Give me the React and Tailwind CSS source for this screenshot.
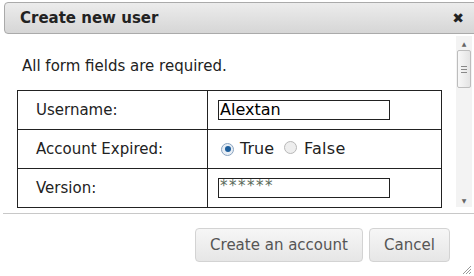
import React from 'react';

const font = { fontFamily: '"DejaVu Sans", Verdana, sans-serif' };

const Radio = ({ checked }) => (
  <span
    className={`inline-flex items-center justify-center w-[13px] h-[13px] rounded-full border ${
      checked ? 'border-[#8aa4c0] bg-[#e8eef5]' : 'border-[#b8b8b8] bg-[#eeeeee]'
    }`}
  >
    {checked && <span className="w-[6px] h-[6px] rounded-full bg-[#1d5e9c]" />}
  </span>
);

export default function App() {
  return (
    <div className="w-[474px] h-[276px] bg-white overflow-hidden text-[#222]" style={font}>
      {/* title bar */}
      <div className="pt-[2px] pl-[4px]">
        <div className="w-[480px] h-[32px] flex items-center justify-between border border-[#aaaaaa] rounded-[4px] bg-gradient-to-b from-[#ececec] to-[#d6d6d6]">
          <span className="pl-[15px] text-[15px] font-bold text-[#222]">Create new user</span>
          <span className="mr-[19px] text-[14px] font-bold leading-none text-[#222]">✖</span>
        </div>
      </div>

      {/* scrolling content */}
      <div className="flex h-[179px]">
        <div className="flex-1 pl-[17px] pt-[22px]">
          <p className="pl-[5px] text-[15px] leading-[20px]">All form fields are required.</p>
          <table className="mt-[14px] w-[425px] border-collapse text-[15px]">
            <tbody>
              <tr className="h-[39px]">
                <td className="w-[190px] border border-[#222] pl-[18px]">Username:</td>
                <td className="border border-[#222] pl-[10px]">
                  <div className="w-[172px] h-[20px] border border-[#222] px-[1px] text-[16px] leading-[18px] text-black">
                    Alextan
                  </div>
                </td>
              </tr>
              <tr className="h-[39px]">
                <td className="border border-[#222] pl-[18px]">Account Expired:</td>
                <td className="border border-[#222] pl-[13px]">
                  <div className="flex items-center text-[16px]">
                    <Radio checked />
                    <span className="ml-[6px]">True</span>
                    <span className="ml-[10px]">
                      <Radio />
                    </span>
                    <span className="ml-[7px] tracking-[0.3px]">False</span>
                  </div>
                </td>
              </tr>
              <tr className="h-[39px]">
                <td className="border border-[#222] pl-[18px]">Version:</td>
                <td className="border border-[#222] pl-[10px]">
                  <div className="w-[172px] h-[20px] border border-[#222] px-[1px] text-[15px] leading-[14px] text-[#5b6b5b] tracking-[1.5px]">
                    ******
                  </div>
                </td>
              </tr>
            </tbody>
          </table>
        </div>

        {/* scrollbar */}
        <div className="w-[16px] mr-[2px] mt-[2px] mb-[6px] flex flex-col items-center bg-[#f3f3f3]">
          <div className="h-[14px] flex items-center justify-center text-[6px] text-[#666]">▲</div>
          <div className="w-[14px] h-[38px] border border-[#bdbdbd] rounded-[2px] bg-gradient-to-r from-[#f8f8f8] to-[#e4e4e4] flex flex-col items-center justify-center gap-[2px]">
            <span className="w-[6px] h-[1px] bg-[#888]" />
            <span className="w-[6px] h-[1px] bg-[#888]" />
            <span className="w-[6px] h-[1px] bg-[#888]" />
          </div>
          <div className="flex-1" />
          <div className="h-[14px] flex items-center justify-center text-[6px] text-[#666]">▼</div>
        </div>
      </div>

      {/* button pane */}
      <div className="ml-[3px] border-t border-[#c8c8c8] h-[63px] flex justify-end items-start pt-[14px] pr-[24px] gap-[6px] relative">
        <button className="h-[34px] w-[168px] border border-[#d3d3d3] rounded-[4px] bg-gradient-to-b from-[#f6f6f6] to-[#e6e6e6] text-[15px] text-[#555]">
          Create an account
        </button>
        <button className="h-[34px] w-[81px] border border-[#d3d3d3] rounded-[4px] bg-gradient-to-b from-[#f6f6f6] to-[#e6e6e6] text-[15px] text-[#555]">
          Cancel
        </button>
        <svg className="absolute right-[2px] bottom-[1px]" width="10" height="10" viewBox="0 0 10 10">
          <path d="M9 1 L1 9 M9 4 L4 9 M9 7 L7 9" stroke="#999" strokeWidth="1" />
        </svg>
      </div>
    </div>
  );
}
